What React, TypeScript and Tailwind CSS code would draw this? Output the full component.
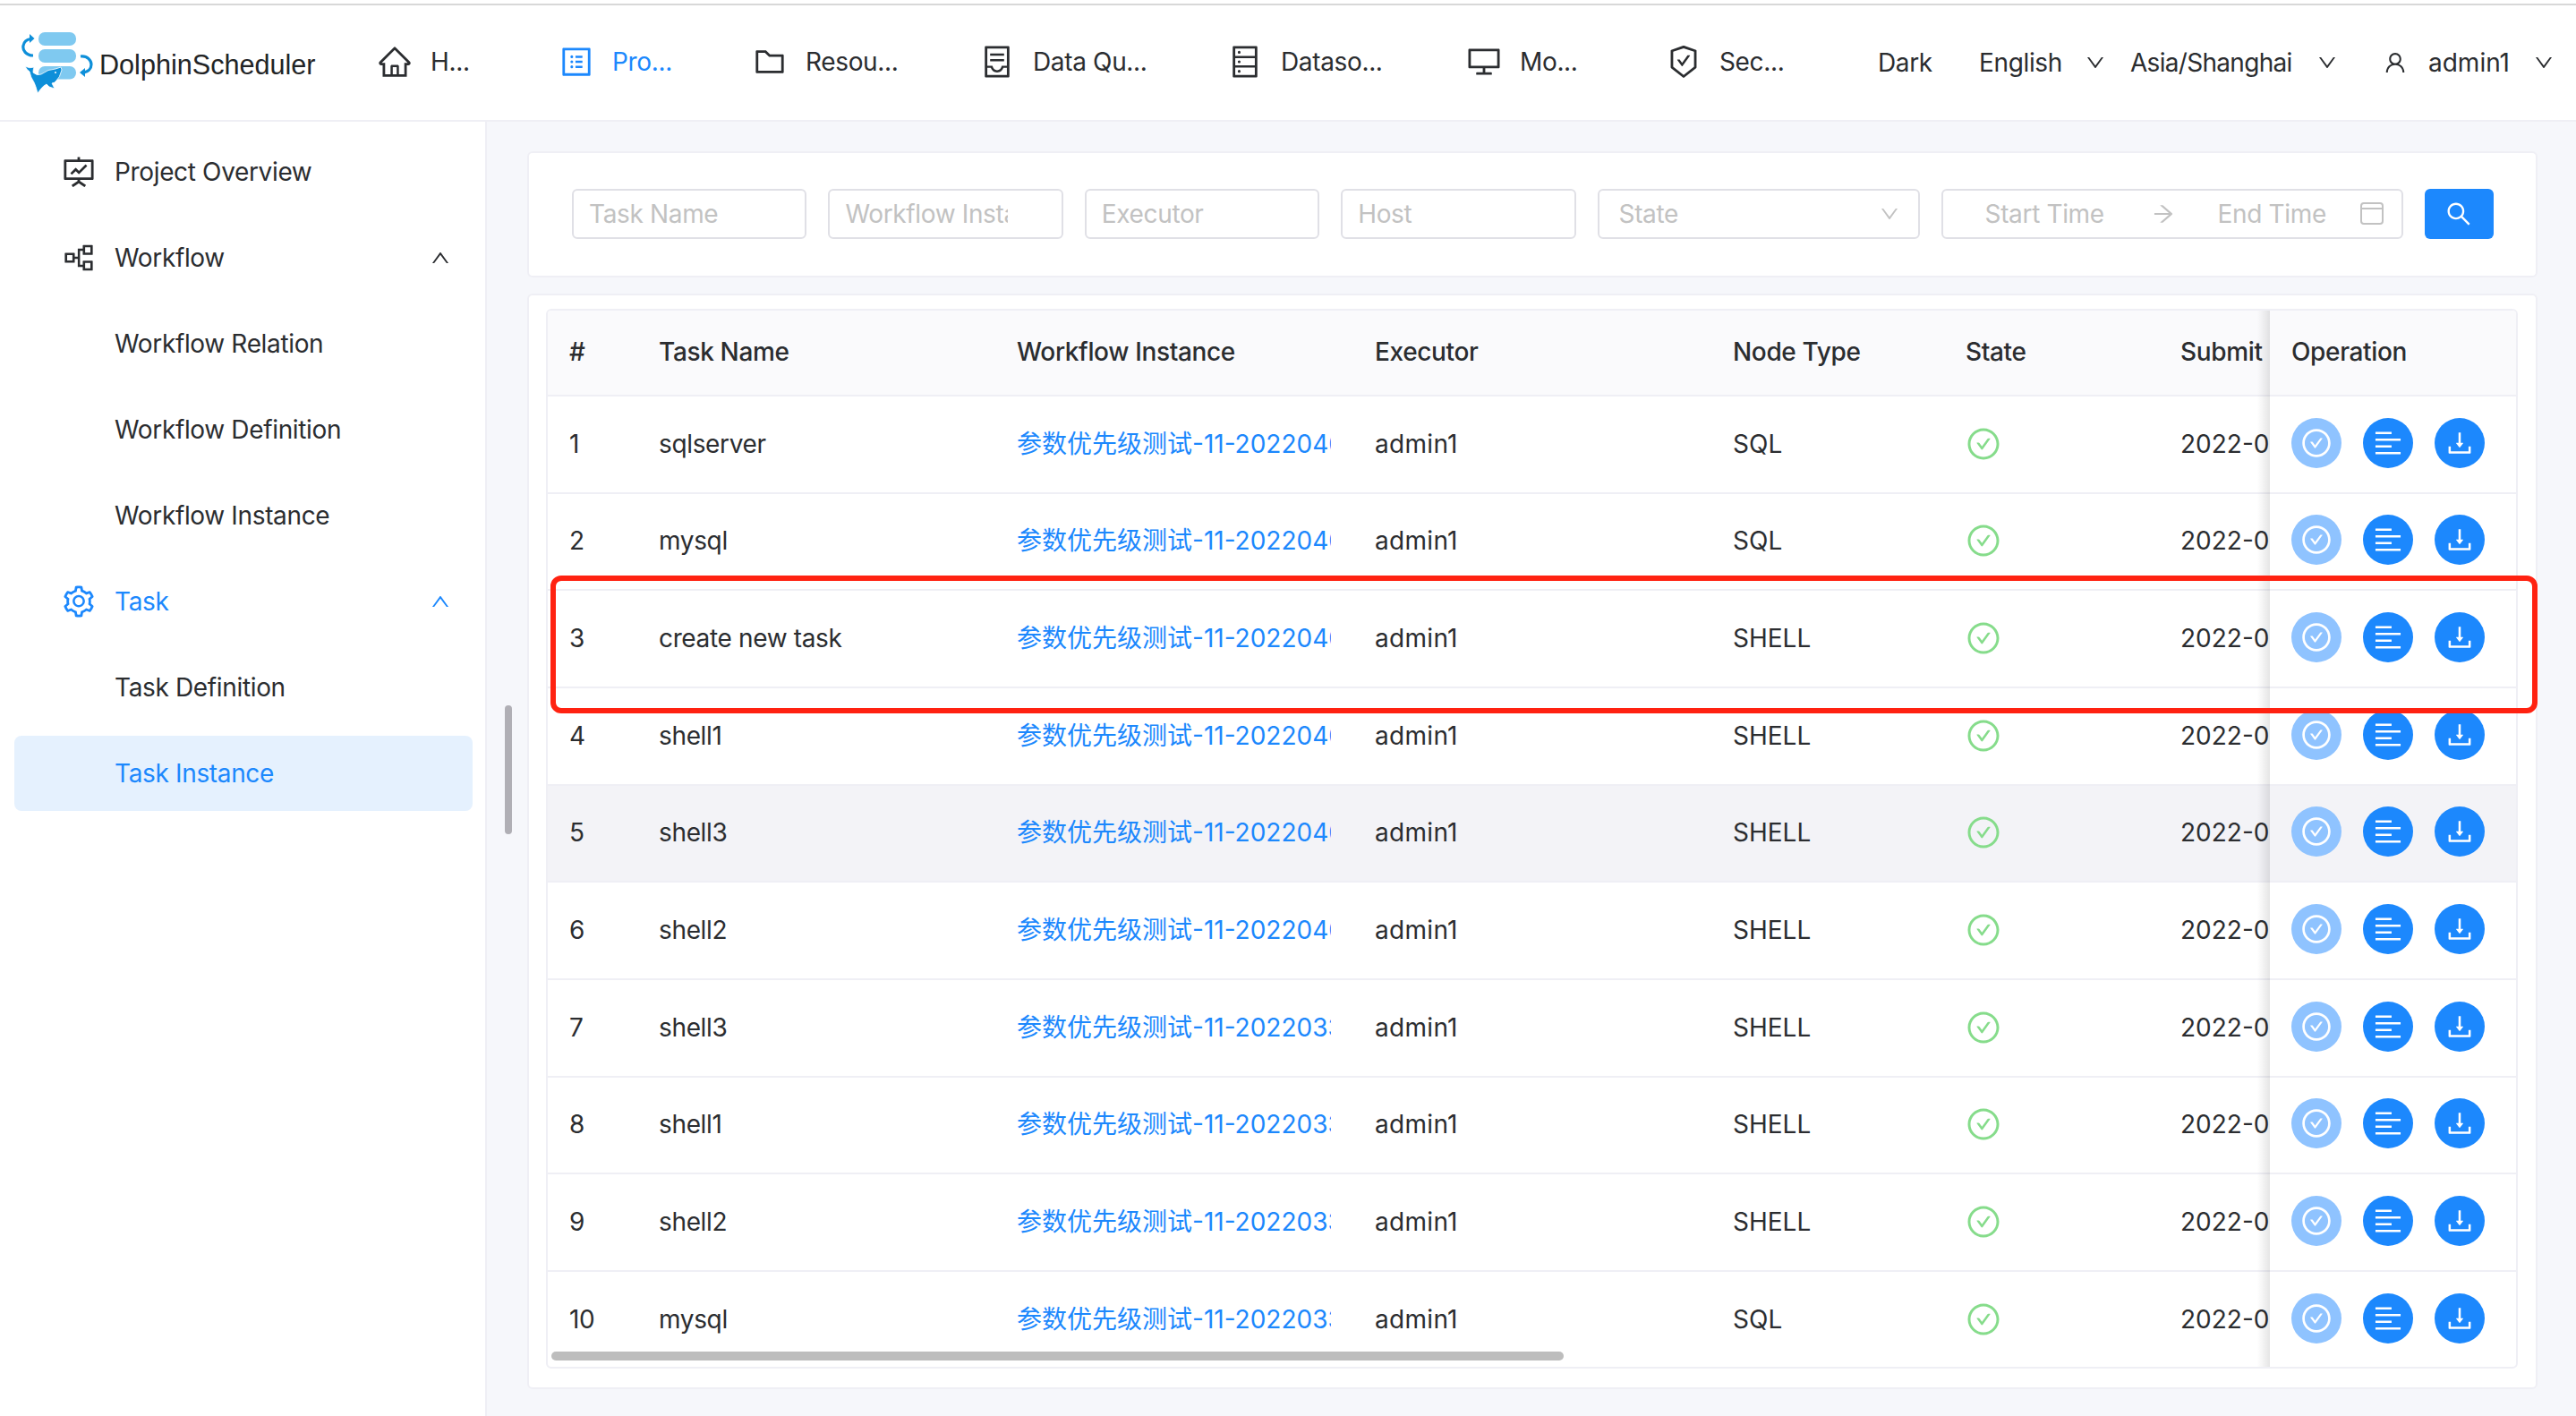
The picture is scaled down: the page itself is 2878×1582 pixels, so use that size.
import React from 'react';
import {
  AiOutlineHome,
  AiOutlineProfile,
  AiOutlineFolder,
  AiOutlineContainer,
  AiOutlineDatabase,
  AiOutlineDesktop,
  AiOutlineSafetyCertificate,
  AiOutlineDown,
  AiOutlineUp,
  AiOutlineUser,
  AiOutlineFundProjectionScreen,
  AiOutlinePartition,
  AiOutlineSetting,
  AiOutlineSearch,
  AiOutlineArrowRight,
  AiOutlineCheckCircle,
  AiOutlineAlignLeft,
  AiOutlineDownload,
} from 'react-icons/ai';

const Logo = () => (
  <svg width="80" height="68" viewBox="0 0 80 68" className="shrink-0">
    <rect x="19" y="0" width="42" height="15" rx="7" fill="#7fc9f0" />
    <rect x="19" y="19" width="42" height="15" rx="7" fill="#7fc9f0" />
    <rect x="19" y="38" width="42" height="14.5" rx="7" fill="#7fc9f0" />
    <path d="M13 26C5 26 1 20 2 15C3 10 6 8 10 7.5" fill="none" stroke="#0e8fd9" strokeWidth="3.2" />
    <path d="M9 2L14.5 7L9 12Z" fill="#0e8fd9" />
    <path d="M66 27C74 26 78 32 78 36C78 41 74 44 70 45" fill="none" stroke="#0e8fd9" strokeWidth="3.2" />
    <path d="M71 40L65 45L71 50Z" fill="#0e8fd9" />
    <path
      d="M4 38Q9 41 14 39Q13 42 13 45Q17 49 22 47Q30 41 38 41L44 39Q46 42 44 45Q43 50 39 54Q37 57 34 57L37 63L31 61L28 58Q24 60 22 63L18 68Q16 60 14 56Q10 50 9 44Q6 42 4 38Z"
      fill="#0e8fd9"
      stroke="#ffffff"
      strokeWidth="0.8"
    />
    <circle cx="38" cy="45" r="1" fill="#ffffff" />
  </svg>
);

const menuItems = [
  { label: 'H...', icon: AiOutlineHome, width: 'w-[203px]' },
  { label: 'Pro...', icon: AiOutlineProfile, width: 'w-[216px]', active: true },
  { label: 'Resou...', icon: AiOutlineFolder, width: 'w-[254px]' },
  { label: 'Data Qu...', icon: AiOutlineContainer, width: 'w-[277px]' },
  { label: 'Dataso...', icon: AiOutlineDatabase, width: 'w-[267px]' },
  { label: 'Mo...', icon: AiOutlineDesktop, width: 'w-[223px]' },
  { label: 'Sec...', icon: AiOutlineSafetyCertificate, width: 'w-[237px]' },
];

const Header = () => (
  <header className="h-[136px] shrink-0 bg-white pt-[4px]">
    <div className="flex h-[132px] items-center border-y-2 border-t-[#d8d8d8] border-b-[#efeff5]">
      <div className="flex w-[421px] shrink-0 items-center gap-[7px] pl-[24px]">
        <Logo />
        <span className="mt-[5px] font-['Liberation_Sans',sans-serif] text-[30.6px] tracking-normal text-[#222426]">DolphinScheduler</span>
      </div>
      {menuItems.map((item) => (
        <div
          key={item.label}
          className={`flex shrink-0 items-center gap-[20px] ${item.width} ${item.active ? 'text-[#1c88fd]' : ''}`}
        >
          <item.icon size={40} className="mt-[-3px]" />
          <span className="mt-[-3px]">{item.label}</span>
        </div>
      ))}
      <span className="w-[113px] shrink-0">Dark</span>
      <div className="flex w-[169px] shrink-0 items-center">
        <span className="w-[118px]">English</span>
        <AiOutlineDown size={24} />
      </div>
      <div className="flex w-[286px] shrink-0 items-center">
        <span className="w-[208px] tracking-[-0.7px]">Asia/Shanghai</span>
        <AiOutlineDown size={24} />
      </div>
      <div className="flex items-center">
        <AiOutlineUser size={28} className="ml-[-4px]" />
        <span className="ml-[23px] w-[117px] tracking-normal">admin1</span>
        <AiOutlineDown size={24} />
      </div>
    </div>
  </header>
);

const sideItems = [
  { label: 'Project Overview', icon: AiOutlineFundProjectionScreen },
  { label: 'Workflow', icon: AiOutlinePartition, open: true },
  { label: 'Workflow Relation' },
  { label: 'Workflow Definition' },
  { label: 'Workflow Instance' },
  { label: 'Task', icon: AiOutlineSetting, open: true, current: true },
  { label: 'Task Definition' },
  { label: 'Task Instance', selected: true },
];

const Sidebar = () => (
  <aside className="flex w-[544px] shrink-0 flex-col gap-[12px] border-r-2 border-[#efeff5] bg-white pt-[14px] pr-[14px] pl-[16px]">
    {sideItems.map((item) => (
      <div
        key={item.label}
        className={`flex h-[84px] items-center rounded-[8px] pl-[52px] ${item.selected ? 'bg-[#e5f1fe]' : ''} ${
          item.selected || item.current ? 'text-[#1c88fd]' : ''
        }`}
      >
        {item.icon ? <item.icon size={40} className="mr-[20px]" /> : <span className="w-[60px]" />}
        <span>{item.label}</span>
        {item.open && <AiOutlineUp size={24} className="mr-[24px] ml-auto" />}
      </div>
    ))}
  </aside>
);

const TextFilter = ({ placeholder }: { placeholder: string }) => (
  <input
    readOnly
    placeholder={placeholder}
    className="h-[56px] w-[262.4px] shrink-0 rounded-[6px] border-2 border-[#e0e0e6] pr-[60px] pl-[17px] outline-none placeholder:text-[#c2c2c2]"
  />
);

const FilterBar = () => (
  <div className="flex h-[141px] items-center gap-[24px] rounded-[6px] border-2 border-[#efeff5] bg-white pb-[2px] pl-[48px]">
    <TextFilter placeholder="Task Name" />
    <TextFilter placeholder="Workflow Instance" />
    <TextFilter placeholder="Executor" />
    <TextFilter placeholder="Host" />
    <div className="flex h-[56px] w-[360px] shrink-0 items-center justify-between rounded-[6px] border-2 border-[#e0e0e6] pr-[20px] pl-[22px] text-[#c2c2c2]">
      <span>State</span>
      <AiOutlineDown size={24} />
    </div>
    <div className="flex h-[56px] w-[516px] shrink-0 items-center rounded-[6px] border-2 border-[#e0e0e6] pl-[47px] text-[#c2c2c2]">
      <span className="w-[136px]">Start Time</span>
      <AiOutlineArrowRight size={28} className="ml-[49px]" />
      <span className="ml-[47px] w-[120px]">End Time</span>
      <svg width="26" height="25" viewBox="0 0 26 25" fill="none" stroke="currentColor" strokeWidth="2" className="ml-[39px]">
        <rect x="1" y="1" width="24" height="23" rx="3" />
        <path d="M1 7H25" />
      </svg>
    </div>
    <button className="flex h-[56px] w-[77px] shrink-0 items-center justify-center rounded-[6px] bg-[#1c88fd] text-white">
      <AiOutlineSearch size={32} />
    </button>
  </div>
);

const rows = [
  { no: 1, name: 'sqlserver', run: '2022040', type: 'SQL' },
  { no: 2, name: 'mysql', run: '2022040', type: 'SQL' },
  { no: 3, name: 'create new task', run: '2022040', type: 'SHELL' },
  { no: 4, name: 'shell1', run: '2022040', type: 'SHELL' },
  { no: 5, name: 'shell3', run: '2022040', type: 'SHELL', hover: true },
  { no: 6, name: 'shell2', run: '2022040', type: 'SHELL' },
  { no: 7, name: 'shell3', run: '2022033', type: 'SHELL' },
  { no: 8, name: 'shell1', run: '2022033', type: 'SHELL' },
  { no: 9, name: 'shell2', run: '2022033', type: 'SHELL' },
  { no: 10, name: 'mysql', run: '2022033', type: 'SQL' },
];

const RoundButton = ({ children, disabled }: { children: React.ReactNode; disabled?: boolean }) => (
  <span
    className={`flex h-[56px] w-[56px] items-center justify-center rounded-full text-white ${
      disabled ? 'bg-[#8fc3ff]' : 'bg-[#1c88fd]'
    }`}
  >
    {children}
  </span>
);

const Table = () => (
  <div className="relative flex h-[1184px] flex-col overflow-hidden rounded-[6px] border-2 border-[#efeff5]">
    <div className="flex h-[96px] shrink-0 items-center border-b-2 border-[#efeff5] bg-[#fafafc] pb-[2px] font-medium">
      <div className="flex min-w-0 flex-1 overflow-hidden">
        <span className="w-[100px] shrink-0 pl-[24px]">#</span>
        <span className="w-[400px] shrink-0 pl-[24px]">Task Name</span>
        <span className="w-[400px] shrink-0 pl-[24px]">Workflow Instance</span>
        <span className="w-[400px] shrink-0 pl-[24px]">Executor</span>
        <span className="w-[260px] shrink-0 pl-[24px]">Node Type</span>
        <span className="w-[240px] shrink-0 pl-[24px]">State</span>
        <span className="w-[260px] shrink-0 pl-[24px]">Submit</span>
      </div>
      <span className="w-[275px] shrink-0 pl-[24px]">Operation</span>
    </div>
    {rows.map((row) => (
      <div
        key={row.no}
        className={`flex shrink-0 items-center ${row.no === 10 ? 'h-[106px]' : 'h-[108.67px] border-b-2 border-[#efeff5] pb-[1px]'} ${
          row.hover ? 'bg-[#f3f3f7]' : ''
        }`}
      >
        <div className="flex min-w-0 flex-1 items-center overflow-hidden">
          <span className="w-[100px] shrink-0 pl-[24px]">{row.no}</span>
          <span className="w-[400px] shrink-0 pl-[24px]">{row.name}</span>
          <span className="w-[400px] shrink-0 pl-[24px]">
            <span className="block w-[351px] overflow-hidden whitespace-nowrap tracking-normal text-[#1c88fd]">参数优先级测试-11-{row.run}</span>
          </span>
          <span className="w-[400px] shrink-0 pl-[24px] tracking-[0.3px]">admin1</span>
          <span className="w-[260px] shrink-0 pl-[24px] tracking-normal">{row.type}</span>
          <span className="w-[240px] shrink-0 pl-[24px] text-[#86dc8b]">
            <AiOutlineCheckCircle size={40} />
          </span>
          <span className="w-[260px] shrink-0 pl-[24px] tracking-normal">2022-0</span>
        </div>
        <div className="flex w-[275px] shrink-0 gap-[24px] pb-[2px] pl-[24px]">
          <RoundButton disabled>
            <AiOutlineCheckCircle size={36} />
          </RoundButton>
          <RoundButton>
            <AiOutlineAlignLeft size={36} />
          </RoundButton>
          <RoundButton>
            <AiOutlineDownload size={34} />
          </RoundButton>
        </div>
      </div>
    ))}
    {/* fixed column shadow */}
    <div className="pointer-events-none absolute top-0 right-[275px] bottom-0 w-[14px] bg-gradient-to-l from-[rgba(0,0,0,0.1)] to-transparent" />
    {/* horizontal scrollbar */}
    <div className="absolute bottom-[7px] left-[4px] h-[10px] w-[1131px] rounded-full bg-[#bdbdbd]" />
  </div>
);

export default function App() {
  return (
    <div className="relative flex h-[1582px] w-[2878px] flex-col overflow-hidden whitespace-nowrap bg-[#f6f7fb] font-['Inter','Noto_Sans_CJK_SC',sans-serif] text-[28px] tracking-[-0.35px] text-[#2b2d30]">
      <Header />
      <div className="flex min-h-0 flex-1">
        <Sidebar />
        <main className="min-w-0 flex-1 pt-[33px] pr-[43px] pl-[45px]">
          <FilterBar />
          <div className="mt-[18px] h-[1224px] rounded-[6px] border-2 border-[#efeff5] bg-white pt-[15px] pr-[20px] pl-[19px]">
            <Table />
          </div>
        </main>
      </div>
      {/* sidebar scrollbar */}
      <div className="absolute top-[788px] left-[564px] h-[144px] w-[8px] rounded-full bg-[#b0afb5]" />
      {/* red annotation box */}
      <div className="pointer-events-none absolute top-[643px] left-[615px] h-[154px] w-[2220px] rounded-[12px] border-[6px] border-[#ff2211]" />
    </div>
  );
}
